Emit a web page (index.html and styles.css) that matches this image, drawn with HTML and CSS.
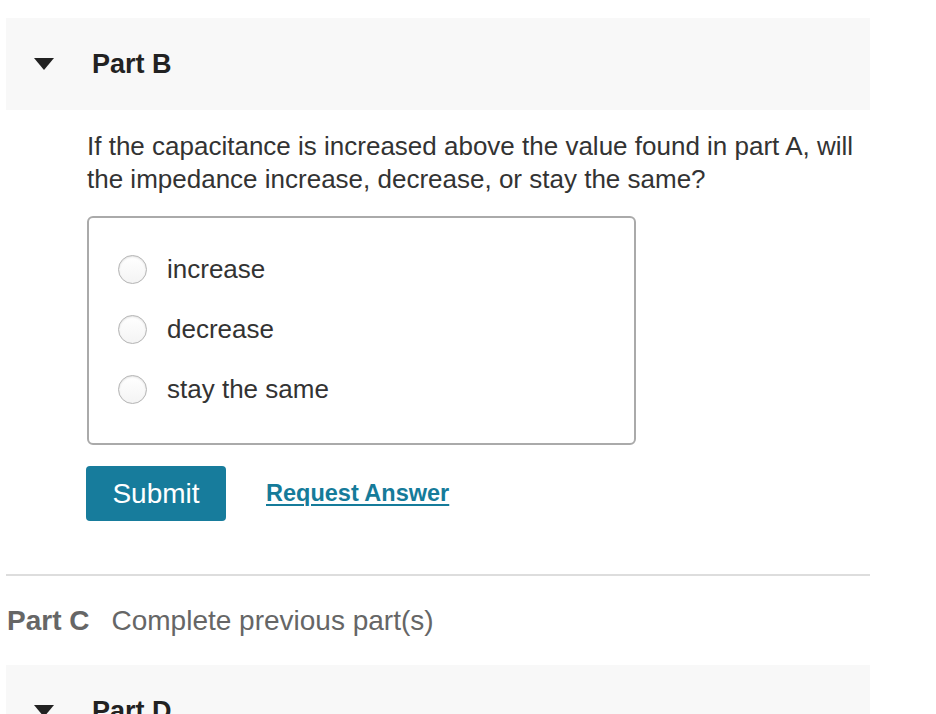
FILE: index.html
```html
<!DOCTYPE html>
<html>
<head>
<meta charset="utf-8">
<link rel="stylesheet" href="styles.css">
</head>
<body>
<div class="page">
  <section class="part">
    <div class="part-head">
      <span class="caret"></span>
      <h2 class="part-title">Part B</h2>
    </div>
    <div class="part-body">
      <p class="question">If the capacitance is increased above the value found in part A, will the impedance increase, decrease, or stay the same?</p>
      <div class="options">
        <label class="option"><span class="radio"></span><span class="opt-text">increase</span></label>
        <label class="option"><span class="radio"></span><span class="opt-text">decrease</span></label>
        <label class="option"><span class="radio"></span><span class="opt-text">stay the same</span></label>
      </div>
      <div class="actions">
        <button class="submit">Submit</button>
        <a class="request" href="#">Request Answer</a>
      </div>
    </div>
  </section>
  <hr class="divider">
  <div class="part-locked">
    <span class="locked-title">Part C</span>
    <span class="locked-note">Complete previous part(s)</span>
  </div>
  <section class="part">
    <div class="part-head">
      <span class="caret"></span>
      <h2 class="part-title">Part D</h2>
    </div>
  </section>
</div>
</body>
</html>
```

FILE: styles.css
```css
html, body {
  margin: 0;
  padding: 0;
  background: #ffffff;
}
body {
  font-family: "Liberation Sans", Arial, sans-serif;
  color: #333333;
  overflow: hidden;
}
.page {
  width: 864px;
  margin-left: 6px;
  padding-top: 18px;
}
.part-head {
  height: 92px;
  background: #f8f8f8;
  display: flex;
  align-items: center;
}
.caret {
  width: 0;
  height: 0;
  margin-left: 28px;
  border-left: 10px solid transparent;
  border-right: 10px solid transparent;
  border-top: 12px solid #222222;
  margin-top: -1px;
}
.part-title {
  margin: 0 0 0 38px;
  font-size: 27px;
  font-weight: bold;
  color: #222222;
}
.part-body {
  padding: 20px 0 0 81px;
}
.question {
  margin: 0;
  font-size: 26px;
  line-height: 33px;
  width: 780px;
}
.options {
  margin-top: 20px;
  width: 549px;
  height: 229px;
  box-sizing: border-box;
  border: 2px solid #aaaaaa;
  border-radius: 6px;
  padding: 37px 0 0 29px;
  display: flex;
  flex-direction: column;
  gap: 32px;
}
.option {
  display: flex;
  align-items: center;
  height: 28px;
}
.radio {
  width: 27px;
  height: 27px;
  border-radius: 50%;
  border: 1px solid #b4b4b4;
  background: linear-gradient(#ffffff, #f4f4f4);
  box-shadow: inset 0 1px 2px rgba(0,0,0,0.12);
}
.opt-text {
  margin-left: 20px;
  font-size: 26px;
}
.actions {
  margin-top: 21px;
  display: flex;
  align-items: center;
}
.submit {
  width: 140px;
  height: 55px;
  margin-left: -1px;
  background: #177c9c;
  border: none;
  border-radius: 4px;
  color: #ffffff;
  font-family: "Liberation Sans", Arial, sans-serif;
  font-size: 28px;
  padding: 0;
}
.request {
  margin-left: 40px;
  font-size: 23.5px;
  font-weight: bold;
  color: #157b9a;
  text-decoration: underline;
  text-decoration-thickness: 2px;
  text-underline-offset: 3px;
}
.divider {
  margin: 53px 0 0 0;
  border: none;
  height: 2px;
  background: #dddddd;
}
.part-locked {
  height: 89px;
  padding-top: 1px;
  box-sizing: border-box;
  display: flex;
  align-items: center;
  padding-left: 1px;
  color: #666666;
}
.locked-title {
  font-size: 28px;
  font-weight: bold;
}
.locked-note {
  margin-left: 22px;
  font-size: 28px;
}
```
